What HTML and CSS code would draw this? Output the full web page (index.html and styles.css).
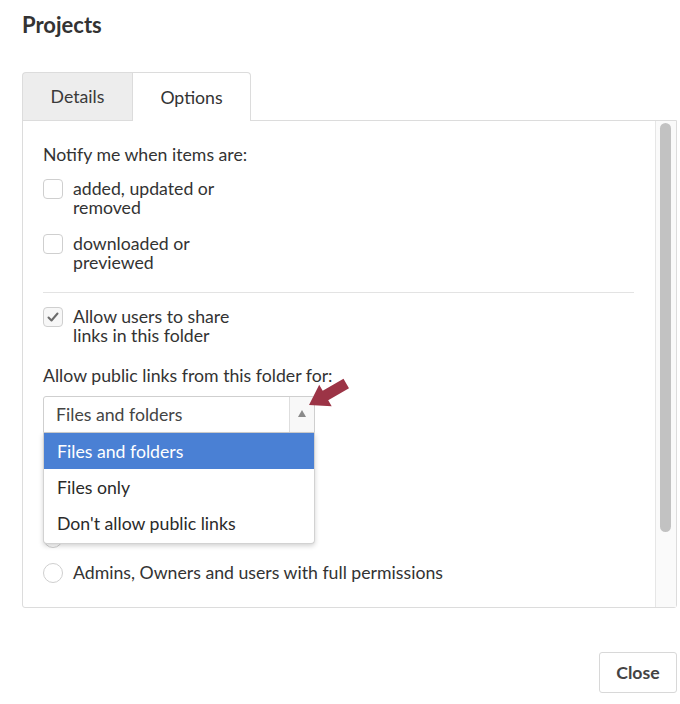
FILE: index.html
```html
<!DOCTYPE html>
<html lang="en">
<head>
<meta charset="utf-8">
<title>Projects</title>
<link rel="stylesheet" href="styles.css">
</head>
<body>
<div class="page">
  <h1 class="title">Projects</h1>

  <div class="tabs">
    <div class="tab tab-inactive">Details</div>
    <div class="tab tab-active">Options</div>
  </div>

  <div class="panel">
    <div class="content">
      <div class="label">Notify me when items are:</div>

      <div class="check-row row-first">
        <span class="checkbox"></span>
        <span class="check-text">added, updated or<br>removed</span>
      </div>
      <div class="check-row row-second">
        <span class="checkbox"></span>
        <span class="check-text">downloaded or<br>previewed</span>
      </div>

      <div class="divider"></div>

      <div class="check-row row-third">
        <span class="checkbox checked">
          <svg class="checkmark" viewBox="0 0 20 20" width="20" height="20"><path d="M5.5 10.5 L8.5 13.5 L14.5 6.5" fill="none" stroke="#6b6b6b" stroke-width="2" stroke-linecap="round" stroke-linejoin="round"/></svg>
        </span>
        <span class="check-text">Allow users to share<br>links in this folder</span>
      </div>

      <div class="label label-links">Allow public links from this folder for:</div>

      <div class="select-wrap">
        <div class="select">
          <span class="select-value">Files and folders</span>
          <span class="select-arrow"><span class="triangle"></span></span>
        </div>
        <ul class="dropdown">
          <li class="option option-active">Files and folders</li>
          <li class="option">Files only</li>
          <li class="option">Don't allow public links</li>
        </ul>
      </div>

      <div class="hidden-label"></div>
      <div class="radio-row radio-first">
        <span class="radio"></span>
      </div>
      <div class="radio-row">
        <span class="radio"></span>
      </div>
      <div class="radio-row">
        <span class="radio"></span>
        <span class="radio-text">Admins, Owners and users with full permissions</span>
      </div>
    </div>
    <div class="scrollbar"><div class="thumb"></div></div>
  </div>

  <div class="footer">
    <button class="btn-close" type="button">Close</button>
  </div>

  <svg class="pointer" width="60" height="44" viewBox="0 0 60 44">
    <polygon transform="translate(9 33) rotate(-30)" points="0,0 19,-12.5 19,-5.5 43,-5.5 43,5.5 19,5.5 19,12.5" fill="#9c3446"/>
  </svg>
</div>
</body>
</html>
```

FILE: styles.css
```css
* { box-sizing: border-box; }

html, body {
  margin: 0;
  padding: 0;
  background: #ffffff;
}

body {
  font-family: "Lato", "Open Sans", "Liberation Sans", sans-serif;
  color: #333333;
  font-size: 17.7px;
  line-height: 19px;
}

.page {
  position: relative;
  width: 680px;
  height: 704px;
  padding: 11px 3px 0 22px;
}

.title {
  margin: 0;
  font-size: 22px;
  line-height: 28px;
  font-weight: 700;
  color: #333333;
}

.tabs {
  display: flex;
  margin-top: 33px;
  height: 49px;
}

.tab {
  display: flex;
  align-items: center;
  justify-content: center;
  height: 49px;
  border: 1px solid #dcdcdc;
}

.tab-inactive {
  width: 110px;
  background: #ededed;
  border-right: none;
  border-radius: 4px 0 0 0;
  color: #3a3a3a;
}

.tab-active {
  width: 119px;
  background: #ffffff;
  border-bottom: none;
  border-radius: 0 4px 0 0;
  position: relative;
  z-index: 1;
}

.panel {
  display: flex;
  margin-top: -1px;
  border: 1px solid #dcdcdc;
  border-radius: 0 0 3px 3px;
}

.content {
  flex: 1;
  padding: 24px 21px 24px 20px;
}

.label {
  line-height: 19px;
}

.check-row,
.radio-row {
  display: flex;
  align-items: flex-start;
  gap: 10px;
}

.row-first { margin-top: 15px; }
.row-second { margin-top: 17px; }
.row-third { margin-top: 14px; }

.checkbox {
  flex: none;
  width: 20px;
  height: 20px;
  border: 1px solid #cfcfcf;
  border-radius: 4px;
  background: #ffffff;
  position: relative;
}

.checkbox.checked {
  background: #f7f7f7;
}

.checkmark {
  position: absolute;
  left: -1px;
  top: -1px;
}

.check-text {
  line-height: 19px;
}

.divider {
  margin-top: 20px;
  height: 1px;
  background: #e3e3e3;
}

.label-links { margin-top: 21px; }

.select-wrap {
  position: relative;
  margin-top: 11px;
  width: 272px;
}

.select {
  display: flex;
  height: 37px;
  border: 1px solid #cfcfcf;
  border-radius: 3px 3px 0 0;
  background: #ffffff;
}

.select-value {
  flex: 1;
  display: flex;
  align-items: center;
  padding-left: 12px;
  color: #444444;
}

.select-arrow {
  width: 25px;
  display: flex;
  align-items: center;
  justify-content: center;
  border-left: 1px solid #dedede;
  background: #f8f8f8;
}

.triangle {
  width: 0;
  height: 0;
  border-left: 4.5px solid transparent;
  border-right: 4.5px solid transparent;
  border-bottom: 7px solid #8a8a8a;
  margin-top: -3px;
}

.dropdown {
  position: absolute;
  left: 0;
  top: 37px;
  width: 272px;
  margin: 0;
  padding: 0 0 2px 0;
  list-style: none;
  background: #ffffff;
  border: 1px solid #d2d2d2;
  border-top: none;
  border-radius: 0 0 4px 4px;
  box-shadow: 0 2px 5px rgba(0, 0, 0, 0.18);
  z-index: 5;
}

.option {
  height: 36px;
  display: flex;
  align-items: center;
  padding-left: 13px;
  color: #2a2a2a;
}

.option-active {
  background: #4a80d4;
  color: #ffffff;
}

.hidden-label {
  margin-top: 22px;
  height: 19px;
}

.radio-row { margin-top: 15px; min-height: 20px; }
.radio-first { margin-top: 19px; }

.radio {
  flex: none;
  width: 20px;
  height: 20px;
  border: 1px solid #cfcfcf;
  border-radius: 50%;
  background: #ffffff;
}

.radio-text {
  line-height: 19px;
}

.scrollbar {
  flex: none;
  width: 21px;
  border-left: 1px solid #e6e6e6;
  background: #fafafa;
  padding: 2px 0 0 4px;
}

.thumb {
  width: 11px;
  height: 409px;
  border-radius: 6px;
  background: #c2c2c2;
}

.footer {
  display: flex;
  justify-content: flex-end;
  margin-top: 44px;
}

.btn-close {
  width: 78px;
  height: 41px;
  border: 1px solid #d8d8d8;
  border-radius: 3px;
  background: #ffffff;
  font-family: "Lato", "Open Sans", "Liberation Sans", sans-serif;
  font-size: 17.7px;
  font-weight: 700;
  color: #444444;
  padding: 0;
}

.pointer {
  position: absolute;
  left: 300px;
  top: 372px;
  z-index: 10;
}
```
